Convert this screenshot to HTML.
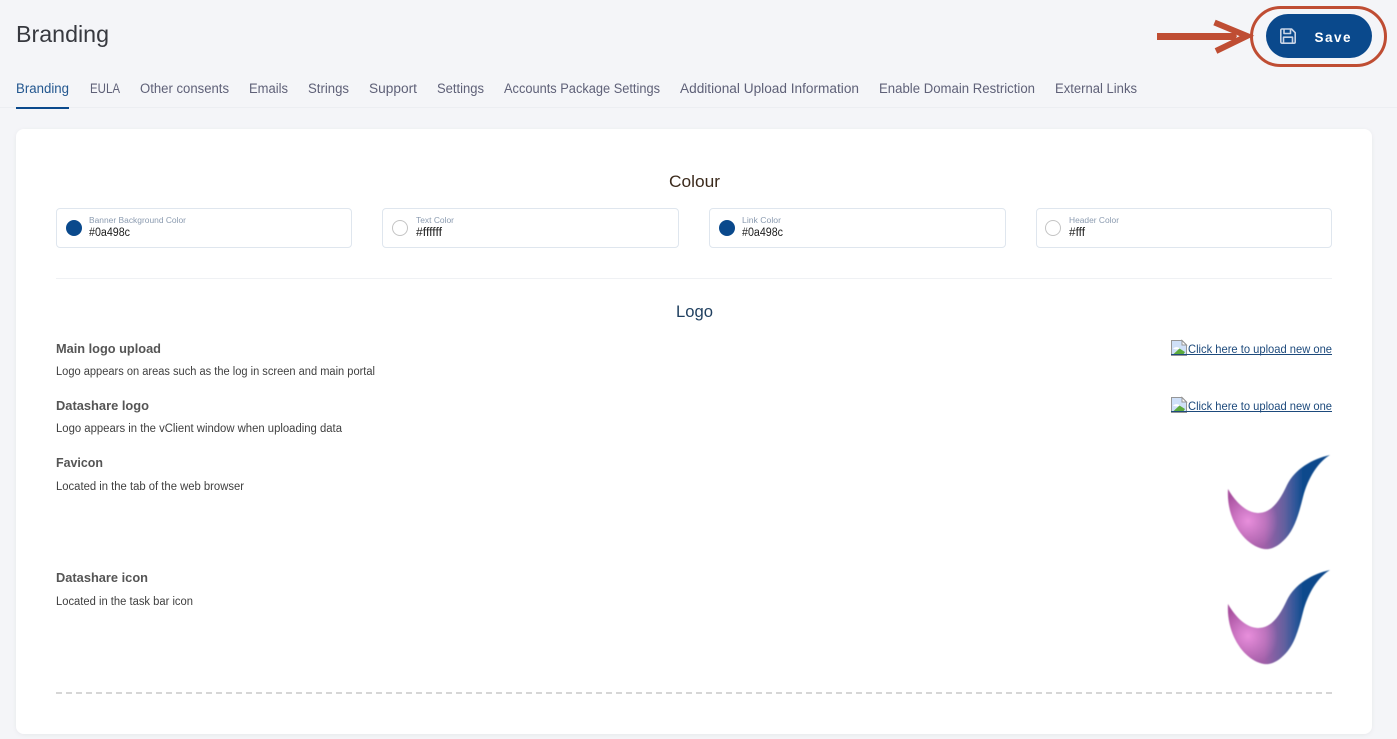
<!DOCTYPE html>
<html lang="en"><head><meta charset="utf-8"><title>Branding</title>
<style>
html,body{margin:0;padding:0;background:#f4f5f8;overflow:hidden}
svg{display:block}
text{font-family:"Liberation Sans",sans-serif}
.tab{font-size:13.5px;fill:#5f6178}
.lab{font-size:8px;fill:#8b9bb0}
.val{font-size:11.5px;fill:#1c1c1c}
.h{font-size:13px;font-weight:bold;fill:#555555}
.d{font-size:11.5px;fill:#3f3f3f}
.lnk{font-size:12px;fill:#1d4a7c}
.box{fill:#fff;stroke:#dfe6ee;stroke-width:1}
</style></head><body>
<svg width="1397" height="739" viewBox="0 0 1397 739" xmlns="http://www.w3.org/2000/svg">
<defs>
<linearGradient id="g" gradientUnits="userSpaceOnUse" x1="1232" y1="0" x2="1304" y2="0">
<stop offset="0" stop-color="#a8509f"/><stop offset=".45" stop-color="#a060a8"/><stop offset=".72" stop-color="#65609f"/><stop offset=".88" stop-color="#2f5799"/><stop offset="1" stop-color="#0a498c"/>
</linearGradient>
<radialGradient id="p" gradientUnits="userSpaceOnUse" cx="1248" cy="521" r="30">
<stop offset="0" stop-color="#e88fdc"/><stop offset="1" stop-color="#e88fdc" stop-opacity="0"/>
</radialGradient>
<filter id="sh" x="-2%" y="-2%" width="104%" height="104%"><feDropShadow dx="0" dy="1" stdDeviation="2" flood-color="#000" flood-opacity=".05"/></filter>
<filter id="bl" x="-5%" y="-5%" width="110%" height="110%"><feGaussianBlur stdDeviation=".4"/></filter>
</defs>
<rect width="1397" height="739" fill="#f4f5f8"/>

<text x="16" y="42" font-size="23" fill="#37393f" textLength="93" lengthAdjust="spacingAndGlyphs">Branding</text>

<!-- Tabs -->
<rect x="0" y="107" width="1397" height="1" fill="#eceef2"/>
<rect x="16" y="107" width="53" height="2" fill="#0a498c"/>
<g>
<text class="tab" x="16" y="93" style="fill:#23578f" textLength="53" lengthAdjust="spacingAndGlyphs">Branding</text>
<text class="tab" x="90" y="93" textLength="30" lengthAdjust="spacingAndGlyphs">EULA</text>
<text class="tab" x="140" y="93" textLength="89" lengthAdjust="spacingAndGlyphs">Other consents</text>
<text class="tab" x="249" y="93" textLength="39" lengthAdjust="spacingAndGlyphs">Emails</text>
<text class="tab" x="308" y="93" textLength="41" lengthAdjust="spacingAndGlyphs">Strings</text>
<text class="tab" x="369" y="93" textLength="48" lengthAdjust="spacingAndGlyphs">Support</text>
<text class="tab" x="437" y="93" textLength="47" lengthAdjust="spacingAndGlyphs">Settings</text>
<text class="tab" x="504" y="93" textLength="156" lengthAdjust="spacingAndGlyphs">Accounts Package Settings</text>
<text class="tab" x="680" y="93" textLength="179" lengthAdjust="spacingAndGlyphs">Additional Upload Information</text>
<text class="tab" x="879" y="93" textLength="156" lengthAdjust="spacingAndGlyphs">Enable Domain Restriction</text>
<text class="tab" x="1055" y="93" textLength="82" lengthAdjust="spacingAndGlyphs">External Links</text>
</g>

<!-- Save annotated -->
<rect x="1266" y="14" width="106" height="44" rx="22" fill="#0a498c"/>
<g fill="none" stroke="#c8d4e6" stroke-width="1.6" stroke-linejoin="round">
<path d="M1282 29h9.500l3.700 3.700v9.300a1.200 1.200 0 0 1-1.200 1.200h-12a1.200 1.200 0 0 1-1.200-1.200v-11.800a1.200 1.200 0 0 1 1.200-1.200z"/>
<path d="M1284 29v4.500h6.500V29"/>
<path d="M1283.500 43.200v-6h9v6"/>
</g>
<text x="1314.500" y="42" font-size="13.500" font-weight="bold" fill="#fff" textLength="36">Save</text>
<rect x="1251.500" y="7.500" width="134" height="58" rx="29" fill="none" stroke="#bf4d33" stroke-width="3"/>
<path d="M1157 33h78l2 3-2 4h-78z" fill="#bf4d33"/>
<path d="M1214.500 22.500L1247 36l-31 15" fill="none" stroke="#bf4d33" stroke-width="6"/>

<!-- Card -->
<rect x="16" y="129" width="1356" height="605" rx="8" fill="#fff" filter="url(#sh)"/>

<text x="669" y="187" font-size="16.500" fill="#3b2a1c" textLength="51" lengthAdjust="spacingAndGlyphs">Colour</text>

<rect class="box" x="56.500" y="208.500" width="295" height="39" rx="3.500"/>
<rect class="box" x="382.500" y="208.500" width="296" height="39" rx="3.500"/>
<rect class="box" x="709.500" y="208.500" width="296" height="39" rx="3.500"/>
<rect class="box" x="1036.500" y="208.500" width="295" height="39" rx="3.500"/>

<circle cx="74" cy="228" r="8" fill="#0a498c"/>
<circle cx="400" cy="228" r="7.500" fill="#fff" stroke="#c4c4c4"/>
<circle cx="727" cy="228" r="8" fill="#0a498c"/>
<circle cx="1053" cy="228" r="7.500" fill="#fff" stroke="#c4c4c4"/>

<text class="lab" x="89" y="223" textLength="97" lengthAdjust="spacingAndGlyphs">Banner Background Color</text>
<text class="val" x="89" y="236" textLength="41" lengthAdjust="spacingAndGlyphs">#0a498c</text>
<text class="lab" x="416" y="223" textLength="38" lengthAdjust="spacingAndGlyphs">Text Color</text>
<text class="val" x="416" y="236" textLength="26" lengthAdjust="spacingAndGlyphs">#ffffff</text>
<text class="lab" x="742" y="223" textLength="39" lengthAdjust="spacingAndGlyphs">Link Color</text>
<text class="val" x="742" y="236" textLength="41" lengthAdjust="spacingAndGlyphs">#0a498c</text>
<text class="lab" x="1069" y="223" textLength="50" lengthAdjust="spacingAndGlyphs">Header Color</text>
<text class="val" x="1069" y="236" textLength="16" lengthAdjust="spacingAndGlyphs">#fff</text>

<rect x="56" y="278" width="1276" height="1" fill="#eff1f4"/>

<text x="676" y="317" font-size="16.500" fill="#1f3f5f" textLength="37" lengthAdjust="spacingAndGlyphs">Logo</text>

<text class="h" x="56" y="353" textLength="105" lengthAdjust="spacingAndGlyphs">Main logo upload</text>
<text class="d" x="56" y="375" textLength="319" lengthAdjust="spacingAndGlyphs">Logo appears on areas such as the log in screen and main portal</text>
<text class="h" x="56" y="410" textLength="93" lengthAdjust="spacingAndGlyphs">Datashare logo</text>
<text class="d" x="56" y="432" textLength="286" lengthAdjust="spacingAndGlyphs">Logo appears in the vClient window when uploading data</text>
<text class="h" x="56" y="467" textLength="47" lengthAdjust="spacingAndGlyphs">Favicon</text>
<text class="d" x="56" y="490" textLength="188" lengthAdjust="spacingAndGlyphs">Located in the tab of the web browser</text>
<text class="h" x="56" y="582" textLength="92" lengthAdjust="spacingAndGlyphs">Datashare icon</text>
<text class="d" x="56" y="605" textLength="137" lengthAdjust="spacingAndGlyphs">Located in the task bar icon</text>

<!-- Upload links -->
<g>
<path d="M1171.500 340.500h10.500l4.500 4.500v10.500h-15z" fill="#cfe0f8" stroke="#969696"/>
<path d="M1182 340.500v4.500h4.500z" fill="#fff" stroke="#969696"/>
<path d="M1173 348.500c2-1.800 5-1.800 7 0-2 1.200-5 1.200-7 0z" fill="#fff"/>
<path d="M1172.500 355l7-6.500 5.500 3.500-2 3z" fill="#5cab3c"/>
<text class="lnk" x="1188" y="353" textLength="144" lengthAdjust="spacingAndGlyphs">Click here to upload new one</text>
<rect x="1171" y="354" width="161" height="1" fill="#1d4a7c"/>
</g>
<g>
<path d="M1171.500 397.500h10.500l4.500 4.500v10.500h-15z" fill="#cfe0f8" stroke="#969696"/>
<path d="M1182 397.500v4.500h4.500z" fill="#fff" stroke="#969696"/>
<path d="M1173 405.500c2-1.800 5-1.800 7 0-2 1.200-5 1.200-7 0z" fill="#fff"/>
<path d="M1172.500 412l7-6.500 5.500 3.500-2 3z" fill="#5cab3c"/>
<text class="lnk" x="1188" y="410" textLength="144" lengthAdjust="spacingAndGlyphs">Click here to upload new one</text>
<rect x="1171" y="411" width="161" height="1" fill="#1d4a7c"/>
</g>

<!-- Logo marks -->
<g filter="url(#bl)">
<path d="M1228 489C1236 503 1247 513 1258 513C1272 513 1280 500 1287 485C1295 469 1312 459 1330 455C1318 462 1308 478 1303 497C1299 513 1295 528 1286 538C1278 547 1270 550 1264 549C1245 546 1226 520 1228 489Z" fill="url(#g)"/>
<path d="M1228 489C1236 503 1247 513 1258 513C1272 513 1280 500 1287 485C1295 469 1312 459 1330 455C1318 462 1308 478 1303 497C1299 513 1295 528 1286 538C1278 547 1270 550 1264 549C1245 546 1226 520 1228 489Z" fill="url(#p)"/>
</g>
<g filter="url(#bl)" transform="translate(0 115)">
<path d="M1228 489C1236 503 1247 513 1258 513C1272 513 1280 500 1287 485C1295 469 1312 459 1330 455C1318 462 1308 478 1303 497C1299 513 1295 528 1286 538C1278 547 1270 550 1264 549C1245 546 1226 520 1228 489Z" fill="url(#g)"/>
<path d="M1228 489C1236 503 1247 513 1258 513C1272 513 1280 500 1287 485C1295 469 1312 459 1330 455C1318 462 1308 478 1303 497C1299 513 1295 528 1286 538C1278 547 1270 550 1264 549C1245 546 1226 520 1228 489Z" fill="url(#p)"/>
</g>

<line x1="56" y1="693" x2="1332" y2="693" stroke="#d6d6d6" stroke-width="2" stroke-dasharray="6 4"/>
</svg>
</body></html>
